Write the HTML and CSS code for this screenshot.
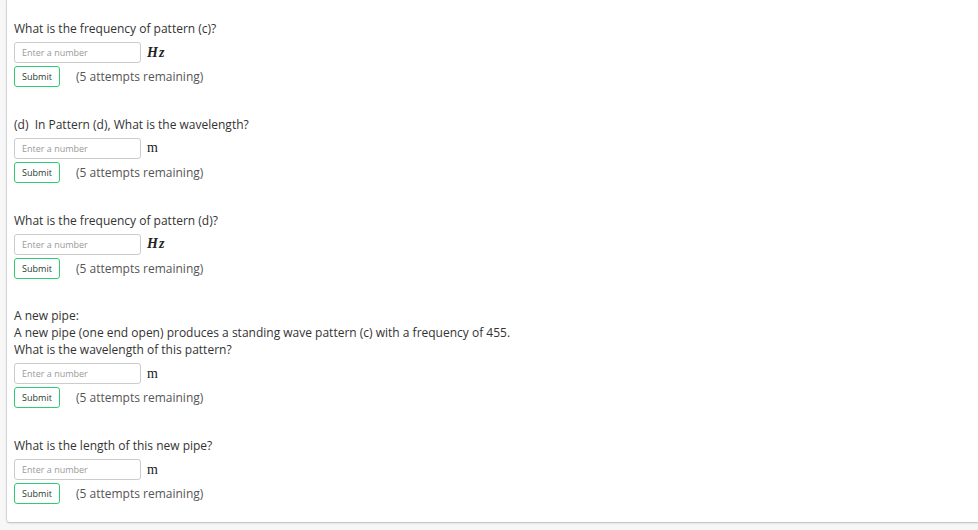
FILE: index.html
```html
<!DOCTYPE html>
<html>
<head>
<meta charset="utf-8">
<link rel="stylesheet" href="styles.css">
</head>
<body>
<div class="card">
  <div class="q first">
    <p class="text">What is the frequency of pattern (c)?</p>
    <div class="answer"><input class="num" placeholder="Enter a number"><span class="unit it">Hz</span></div>
    <div class="submit-row"><button class="submit">Submit</button><span class="attempts">(5 attempts remaining)</span></div>
  </div>
  <div class="q">
    <p class="text">(d)&nbsp; In Pattern (d), What is the wavelength?</p>
    <div class="answer"><input class="num" placeholder="Enter a number"><span class="unit">m</span></div>
    <div class="submit-row"><button class="submit">Submit</button><span class="attempts">(5 attempts remaining)</span></div>
  </div>
  <div class="q">
    <p class="text">What is the frequency of pattern (d)?</p>
    <div class="answer"><input class="num" placeholder="Enter a number"><span class="unit it">Hz</span></div>
    <div class="submit-row"><button class="submit">Submit</button><span class="attempts">(5 attempts remaining)</span></div>
  </div>
  <div class="q">
    <p class="text">A new pipe:<br>A new pipe (one end open) produces a standing wave pattern (c) with a frequency of 455.<br>What is the wavelength of this pattern?</p>
    <div class="answer"><input class="num" placeholder="Enter a number"><span class="unit">m</span></div>
    <div class="submit-row"><button class="submit">Submit</button><span class="attempts">(5 attempts remaining)</span></div>
  </div>
  <div class="q">
    <p class="text">What is the length of this new pipe?</p>
    <div class="answer"><input class="num" placeholder="Enter a number"><span class="unit">m</span></div>
    <div class="submit-row"><button class="submit">Submit</button><span class="attempts">(5 attempts remaining)</span></div>
  </div>
</div>
</body>
</html>
```
FILE: styles.css
```css
html, body {
  margin: 0;
  padding: 0;
  background: #f7f7f7;
  height: 530px;
  overflow: hidden;
}
.card {
  margin-left: 6px;
  width: 1000px;
  background: #fff;
  border-left: 1px solid #d4d4d4;
  border-bottom: 1px solid #c8c8c8;
  border-bottom-left-radius: 4px;
  box-shadow: 0 1px 2px rgba(0,0,0,0.08);
  padding: 20px 0 18px 7px;
  font-family: "Open Sans", "Liberation Sans", sans-serif;
  font-size: 12px;
  color: #333;
}
.q { margin-top: 28.75px; }
.q.first { margin-top: 0; }
.text {
  margin: 0;
  line-height: 17px;
}
.answer {
  display: flex;
  align-items: center;
  margin-top: 5px;
  height: 21px;
}
.num {
  box-sizing: border-box;
  width: 127px;
  height: 21px;
  border: 1px solid #ccc;
  border-radius: 3px;
  padding: 0 7px;
  font-family: "Open Sans", "Liberation Sans", sans-serif;
  font-size: 9px;
  color: #333;
  outline: none;
}
.num::placeholder { color: #9a9a9a; }
.unit {
  margin-left: 6px;
  font-family: "Liberation Serif", "DejaVu Serif", serif;
  font-size: 14px;
  color: #222;
}
.unit.it {
  font-style: italic;
  font-weight: bold;
  letter-spacing: 1px;
}
.submit-row {
  display: flex;
  align-items: center;
  margin-top: 3px;
  height: 21px;
}
.submit {
  box-sizing: border-box;
  width: 46px;
  height: 21px;
  background: #fff;
  border: 1px solid #2ecc71;
  border-radius: 3px;
  padding: 0;
  font-family: "Open Sans", "Liberation Sans", sans-serif;
  font-size: 9px;
  color: #274032;
}
.attempts {
  margin-left: 16px;
  color: #555;
  font-size: 12px;
}
```
